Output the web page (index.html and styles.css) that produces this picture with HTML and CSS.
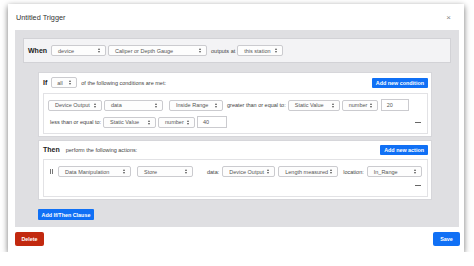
FILE: index.html
```html
<!DOCTYPE html>
<html lang="en">
<head>
    <meta charset="UTF-8">
    <title>Untitled Trigger</title>
    <link rel="stylesheet" href="styles.css">
</head>
<body>
    <div class="modal">
        <div class="modal-titulo">
            <span>Untitled Trigger</span>
            <span class="cerrar">&times;</span>
        </div>

        <div class="modal-cuerpo">
            <!-- fila When -->
            <div class="panel-when">
                <span class="etiqueta-fuerte">When</span>
                <div class="sel w-device">device <span class="flechas"></span></div>
                <div class="sel w-caliper">Caliper or Depth Gauge <span class="flechas"></span></div>
                <span class="texto">outputs at</span>
                <div class="sel w-station">this station <span class="flechas"></span></div>
            </div>

            <div class="clausula">
                <!-- If -->
                <div class="panel">
                    <div class="cabecera">
                        <span class="etiqueta-fuerte">If</span>
                        <div class="sel w-all">all <span class="flechas"></span></div>
                        <span class="texto">of the following conditions are met:</span>
                        <div class="boton boton-azul empuja">Add new condition</div>
                    </div>
                    <div class="caja">
                        <div class="fila">
                            <div class="sel w-devout">Device Output <span class="flechas"></span></div>
                            <div class="sel w-data">data <span class="flechas"></span></div>
                            <div class="sel w-range">Inside Range <span class="flechas"></span></div>
                            <span class="texto">greater than or equal to:</span>
                            <div class="sel w-static">Static Value <span class="flechas"></span></div>
                            <div class="sel w-number">number <span class="flechas"></span></div>
                            <div class="entrada w-20">20</div>
                        </div>
                        <div class="fila">
                            <span class="texto">less than or equal to:</span>
                            <div class="sel w-static2">Static Value <span class="flechas"></span></div>
                            <div class="sel w-number2">number <span class="flechas"></span></div>
                            <div class="entrada w-40">40</div>
                            <span class="quitar empuja"></span>
                        </div>
                    </div>
                </div>

                <!-- Then -->
                <div class="panel panel-then">
                    <div class="cabecera">
                        <span class="etiqueta-fuerte">Then</span>
                        <span class="texto">perform the following actions:</span>
                        <div class="boton boton-azul empuja">Add new action</div>
                    </div>
                    <div class="caja caja-then">
                        <div class="fila">
                            <span class="asa"></span>
                            <div class="sel w-manip">Data Manipulation <span class="flechas"></span></div>
                            <div class="sel w-store">Store <span class="flechas"></span></div>
                            <span class="texto t-data">data:</span>
                            <div class="sel w-devout2">Device Output <span class="flechas"></span></div>
                            <div class="sel w-length">Length measured <span class="flechas"></span></div>
                            <span class="texto t-loc">location:</span>
                            <div class="sel w-inrange">In_Range <span class="flechas"></span></div>
                        </div>
                        <div class="fila-quitar">
                            <span class="quitar"></span>
                        </div>
                    </div>
                </div>

                <div class="boton boton-azul boton-clausula">Add If/Then Clause</div>
            </div>
        </div>

        <div class="modal-pie">
            <div class="boton boton-rojo">Delete</div>
            <div class="boton boton-azul boton-save">Save</div>
        </div>
    </div>
</body>
</html>
```

FILE: styles.css
```css
body {
    margin: 0;
    padding: 4px 0 0 8px;
    background-color: white;
    font-family: "Liberation Sans", Arial, sans-serif;
    color: #333;
}

.modal {
    width: 456px;
    height: 248px;
    background-color: white;
    box-shadow: 0 2px 6px rgba(0, 0, 0, 0.55);
    display: flex;
    flex-direction: column;
}

.modal-titulo {
    height: 26px;
    display: flex;
    align-items: center;
    justify-content: space-between;
    padding: 0 13px 0 8px;
    font-size: 7.3px;
    color: #333;
}

.cerrar {
    font-size: 8px;
    color: #888;
}

.modal-cuerpo {
    height: 197px;
    box-sizing: border-box;
    margin: 0 5px 0 7px;
    padding: 8px 8px 7px 8px;
    background-color: #dfdfe2;
}

.panel-when {
    height: 25px;
    box-sizing: border-box;
    border: 1px solid #d2d2d6;
    background-color: #f3f3f5;
    display: flex;
    align-items: center;
    padding-left: 4px;
    margin-bottom: 9px;
}

.etiqueta-fuerte {
    font-size: 7px;
    font-weight: bold;
    color: #222;
    margin-right: 4px;
}

.texto {
    font-size: 5.5px;
    color: #444;
    margin: 0 2px;
    white-space: nowrap;
}

.sel {
    height: 11px;
    box-sizing: border-box;
    border: 1px solid #cbcbcf;
    border-radius: 2px;
    background-color: #fdfdfd;
    font-size: 5.5px;
    color: #555;
    display: flex;
    align-items: center;
    justify-content: space-between;
    padding: 0 5px 0 6px;
    margin-right: 2px;
    white-space: nowrap;
}

.flechas {
    display: flex;
    flex-direction: column;
    gap: 1px;
}

.flechas::before,
.flechas::after {
    content: "";
    width: 0;
    height: 0;
    border-left: 1.5px solid transparent;
    border-right: 1.5px solid transparent;
}

.flechas::before {
    border-bottom: 2px solid #555;
}

.flechas::after {
    border-top: 2px solid #555;
}

.entrada {
    height: 12px;
    box-sizing: border-box;
    border: 1px solid #cbcbcf;
    background-color: white;
    font-size: 5.5px;
    color: #555;
    display: flex;
    align-items: center;
    padding-left: 5px;
    margin-right: 2px;
}

/* anchos de los selects */
.w-device { width: 55px; }
.w-caliper { width: 99px; }
.w-station { width: 46px; }
.w-all { width: 26px; padding-left: 5px; }
.w-devout { width: 54px; }
.w-data { width: 59px; margin-right: 6px; }
.w-range { width: 54px; }
.w-static { width: 52px; }
.w-number { width: 36px; margin-right: 3px; }
.w-20 { width: 28px; }
.w-static2 { width: 53px; }
.w-number2 { width: 37px; }
.w-40 { width: 30px; }
.w-manip { width: 73px; margin-right: 6px; }
.w-store { width: 56px; margin-right: 12px; }
.w-devout2 { width: 53px; margin-right: 3px; }
.w-length { width: 60px; }
.w-inrange { width: 55px; }

.clausula {
    margin: 0 19px 0 15px;
}

.panel {
    height: 65px;
    box-sizing: border-box;
    border: 1px solid #d6d6da;
    background-color: white;
    padding: 4px 3px 2px 4px;
}

.panel-then {
    height: 60px;
    margin-top: 3px;
    padding-top: 3px;
}

.cabecera {
    height: 11px;
    display: flex;
    align-items: center;
    margin-bottom: 5px;
}

.panel-then .cabecera {
    margin-bottom: 4px;
}

.empuja {
    margin-left: auto;
}

.caja {
    height: 41px;
    box-sizing: border-box;
    border: 1px solid #e2e2e5;
    padding: 5px 3px 5px 4px;
    display: flex;
    flex-direction: column;
    gap: 5px;
}

.caja-then {
    height: 38px;
    padding-top: 6px;
    gap: 3px;
}

.fila {
    display: flex;
    align-items: center;
    height: 12px;
}

.caja-then .fila {
    height: 11px;
}

.fila-quitar {
    height: 10px;
    display: flex;
    align-items: center;
    justify-content: flex-end;
}

.quitar {
    width: 6px;
    height: 1px;
    background-color: #666;
    margin-right: 3px;
}

.asa {
    width: 1px;
    height: 5px;
    border-left: 1px solid #777;
    border-right: 1px solid #777;
    margin: 0 5px 0 2px;
}

.t-data {
    margin: 0 3px 0 2px;
}

.t-loc {
    margin: 0 3px 0 3px;
}

.boton {
    font-size: 5.4px;
    font-weight: bold;
    color: white;
    border-radius: 1px;
    display: flex;
    align-items: center;
    justify-content: center;
    white-space: nowrap;
}

.boton-azul {
    background-color: #1070f5;
}

.cabecera .boton {
    height: 10px;
    padding: 0 4px;
}

.boton-clausula {
    width: 56px;
    height: 11px;
    margin-top: 9px;
}

.modal-pie {
    height: 25px;
    box-sizing: border-box;
    display: flex;
    justify-content: space-between;
    align-items: flex-start;
    padding: 5px 4px 0 7px;
}

.modal-pie .boton {
    height: 14px;
    font-size: 5.4px;
    border-radius: 2px;
}

.boton-rojo {
    background-color: #c2290f;
    width: 29px;
}

.boton-save {
    width: 27px;
}
```
